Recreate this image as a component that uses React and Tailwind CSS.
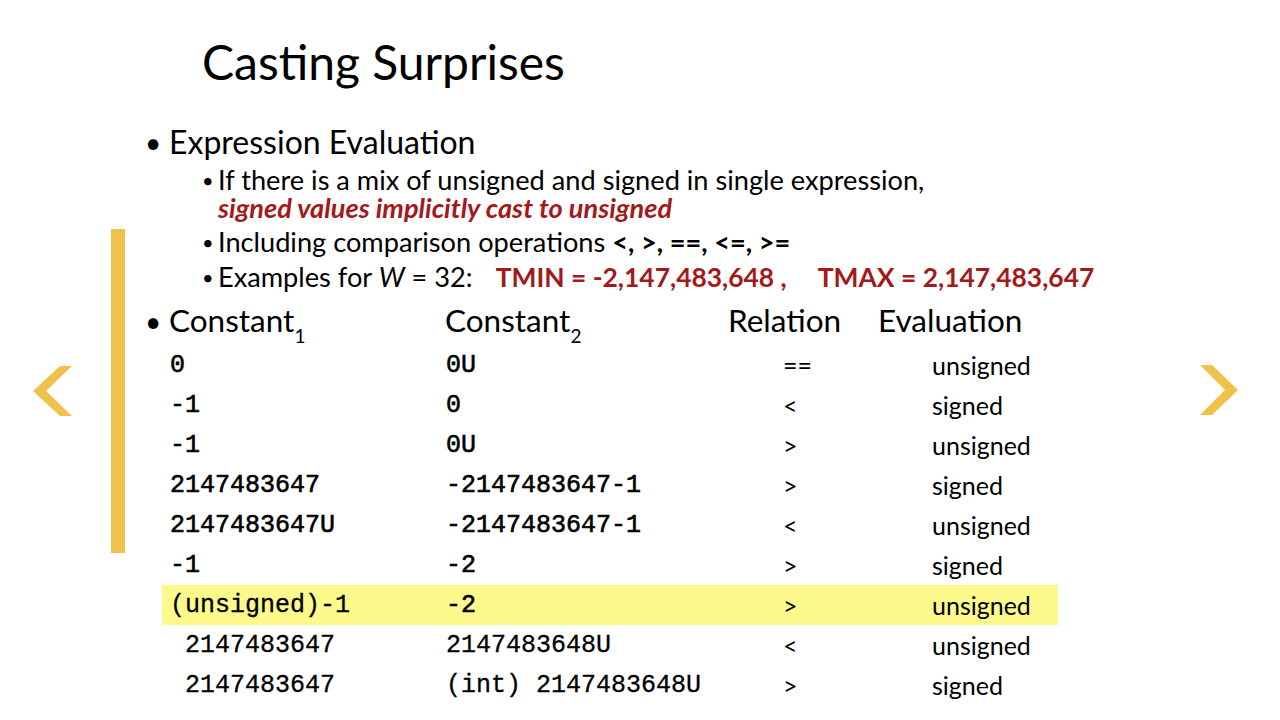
import React from "react";

const sans = { fontFamily: "Lato, 'Open Sans', sans-serif" };
const mono = { fontFamily: "'Liberation Mono', 'Courier New', monospace" };

const rows = [
  ["0", "0U", "==", "unsigned", false, true],
  ["-1", "0", "<", "signed", false, true],
  ["-1", "0U", ">", "unsigned", false, true],
  ["2147483647", "-2147483647-1", ">", "signed", false, true],
  ["2147483647U", "-2147483647-1", "<", "unsigned", false, true],
  ["-1", "-2", ">", "signed", false, true],
  ["(unsigned)-1", "-2", ">", "unsigned", true, false],
  [" 2147483647", "2147483648U", "<", "unsigned", false, false],
  [" 2147483647", "(int) 2147483648U", ">", "signed", false, false],
];

export default function App() {
  return (
    <div className="relative w-[1280px] h-[720px] bg-white overflow-hidden text-black" style={sans}>
      {/* overlay decorations */}
      <div className="absolute left-[111px] top-[229px] w-[14px] h-[324px] bg-[#f0c24b]" />
      <svg className="absolute left-0 top-0" width="1280" height="720" viewBox="0 0 1280 720">
        <polygon points="33,391 60,366 72,366 46,391 72,416 60,416" fill="#f0c24b" />
        <polygon points="1200,365 1212,365 1238,390 1212,415 1200,415 1225,390" fill="#f0c24b" />
      </svg>

      <div className="relative flex flex-col">
        <div className="mt-[30px] h-[64px] pl-[202px] flex items-center text-[48px] leading-none">
          Casting Surprises
        </div>

        <div className="mt-[30px] h-[36px] flex items-center text-[32px] leading-none">
          <span className="w-[169px] pl-[145px] text-[28px]">•</span>
          <span>Expression Evaluation</span>
        </div>

        <div className="mt-[6px] flex flex-col text-[27.2px] leading-none">
          <div className="h-[28px] flex items-center">
            <span className="w-[218px] pl-[202px] text-[20px]">•</span>
            <span>If there is a mix of unsigned and signed in single expression,</span>
          </div>
          <div className="h-[28px] flex items-center pl-[218px] text-[#a3191c] font-bold italic">
            signed values implicitly cast to unsigned
          </div>
          <div className="mt-[6px] h-[28px] flex items-center">
            <span className="w-[218px] pl-[202px] text-[20px]">•</span>
            <span>
              Including comparison operations <b>&lt;, &gt;, ==, &lt;=, &gt;=</b>
            </span>
          </div>
          <div className="mt-[7px] h-[28px] flex items-center">
            <span className="w-[218px] pl-[202px] text-[20px]">•</span>
            <span className="whitespace-pre">Examples for <i>W</i> = 32:</span>
            <b className="ml-[23px] whitespace-pre text-[#a3191c] text-[26.4px]">
              TMIN = -2,147,483,648 ,<span className="inline-block w-[31px]" />TMAX = 2,147,483,647
            </b>
          </div>
        </div>

        <div className="mt-[6px] h-[48px] flex items-center text-[31.5px] leading-none">
          <span className="w-[169px] pl-[145px] text-[28px]">•</span>
          <div className="grid grid-cols-[276px_283px_150px_1fr] flex-1">
            <span>
              Constant<sub className="text-[19px] align-[-6px]">1</sub>
            </span>
            <span>
              Constant<sub className="text-[19px] align-[-6px]">2</sub>
            </span>
            <span>Relation</span>
            <span>Evaluation</span>
          </div>
        </div>

        <div className="flex flex-col">
          {rows.map((r, i) => (
            <div
              key={i}
              className={`ml-[162px] w-[896px] pl-[8px] h-[40px] grid grid-cols-[276px_337px_149px_1fr] items-center ${
                r[4] ? "bg-[#fdf98a]" : ""
              }`}
            >
              <span
                className={`whitespace-pre text-[25px] leading-none ${r[5] ? "[-webkit-text-stroke:0.6px_black]" : "[-webkit-text-stroke:0.3px_black]"}`}
                style={mono}
              >
                {r[0]}
              </span>
              <span
                className={`whitespace-pre text-[25px] leading-none ${r[5] || r[4] ? "[-webkit-text-stroke:0.6px_black]" : "[-webkit-text-stroke:0.3px_black]"}`}
                style={mono}
              >
                {r[1]}
              </span>
              <span className="text-[25px] leading-none">{r[2]}</span>
              <span className="text-[25px] leading-none">{r[3]}</span>
            </div>
          ))}
        </div>
      </div>
    </div>
  );
}
